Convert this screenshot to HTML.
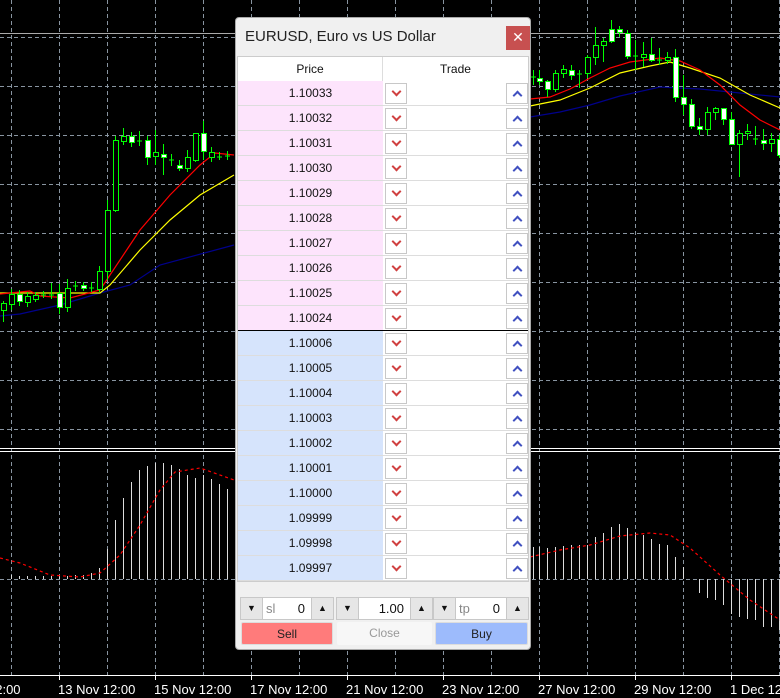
<!DOCTYPE html>
<html><head><meta charset="utf-8"><style>
*{margin:0;padding:0;box-sizing:border-box}
body{width:780px;height:698px;background:#000;position:relative;overflow:hidden;font-family:"Liberation Sans",sans-serif}
svg{position:absolute;left:0;top:0}
.dlg{position:absolute;left:235px;top:17px;width:296px;height:633px;background:#f0f0f0;border:1px solid #aaa;border-radius:4px}
.title{position:absolute;left:9px;top:10px;font-size:15px;color:#222}
.close{position:absolute;left:270px;top:8px;width:24px;height:24px;background:#c75050;color:#fff;font-size:14px;text-align:center;line-height:23px}
.tbl{position:absolute;left:1px;top:38px;width:292px;height:526px;background:#fff;border:1px solid #ccc}
.hd{position:absolute;top:0;height:24px;font-size:12px;text-align:center;line-height:24px;color:#111}
.r{position:absolute;left:0;width:290px;height:25px;border-bottom:1px solid #ddd}
.p{position:absolute;left:0;top:0;width:145px;height:24px;font-size:12px;text-align:center;line-height:25px;color:#111}
.dn,.up{position:absolute;top:2px;width:22px;height:21px;border:1px solid #c8c8c8;background:#fff}
.dn{left:147px}.up{left:268px}
.dn:after,.up:after{content:"";position:absolute;left:7px;width:5px;height:5px;border-style:solid;transform:rotate(45deg)}
.dn:after{top:4px;border-color:#d04040;border-width:0 2px 2px 0}
.up:after{top:8px;border-color:#4050c0;border-width:2px 0 0 2px}
.sp{position:absolute;top:579px;height:23px;border:1px solid #c8c8c8;background:#e6e6e6}
.ar{font-size:9px;text-align:center;line-height:21px;color:#111}
.in{background:#fff;font-size:13px;color:#111;text-align:right;padding-right:6px;line-height:21px}
.btn{position:absolute;top:604px;height:23px;font-size:12px;text-align:center;line-height:22px;border-radius:2px}
</style></head><body>
<svg width="780" height="698">
<g stroke="#8894a0" stroke-dasharray="4,3" stroke-width="1">
<path d="M11.5 0V675M59.5 0V675M107.5 0V675M155.5 0V675M203.5 0V675M251.5 0V675M299.5 0V675M347.5 0V675M395.5 0V675M443.5 0V675M491.5 0V675M539.5 0V675M587.5 0V675M635.5 0V675M683.5 0V675M731.5 0V675M779.5 0V675"/>
<path d="M0 37.5H780M0 86.5H780M0 135.5H780M0 184.5H780M0 233.5H780M0 282.5H780M0 331.5H780M0 380.5H780M0 429.5H780M0 579.5H780"/>
</g>
<path d="M0 33.5H780" stroke="#aaa"/>
<path d="M0 448.5H780M0 451.5H780M0 675.5H780" stroke="#fff"/>
<path d="M59.5 675V680M155.5 675V680M251.5 675V680M347.5 675V680M443.5 675V680M539.5 675V680M635.5 675V680M731.5 675V680" stroke="#fff"/>
<g fill="none" stroke-width="1.2">
<polyline stroke="#00008b" points="0,316 20,314 60,305 100,293 130,285 160,265 234,245"/>
<polyline stroke="#ff0" points="0,293 100,293 110,285 140,250 170,220 200,195 234,175"/>
<polyline stroke="#f00" points="0,294 20,292 30,291 40,296 70,298 100,290 110,275 140,230 170,195 200,165 215,153 234,155"/>
<polyline stroke="#00008b" points="530,117 560,112 590,105 620,96 660,87 700,89 740,93 780,97"/>
<polyline stroke="#ff0" points="530,106 560,100 590,88 620,73 650,66 670,62 690,68 720,78 750,95 780,108"/>
<polyline stroke="#f00" points="530,99 550,97 570,89 590,78 610,68 630,62 660,58 680,61 700,70 720,85 740,105 760,120 780,130"/>
</g>
<g stroke="#0f0" stroke-width="1" fill="#000">
<path d="M3.5 301V322M11.5 289V310M19.5 290V306M27.5 292V307M35.5 292V302M43.5 291V298M51.5 283V299M59.5 284V314M67.5 279V312M75.5 281V291M83.5 282V291M91.5 282V292M99.5 266V292M107.5 200V280M115.5 136V212M123.5 128V145M131.5 132V147M139.5 131V146M147.5 136V165M155.5 130V165M163.5 144V175M171.5 154V166M179.5 160V171M187.5 150V172M195.5 150V162M203.5 121V160M211.5 147V162M219.5 152V160M227.5 151V160"/>
<path d="M533.5 70V85M539.5 70V85M547.5 80V97M555.5 70V92M563.5 65V78M571.5 65V80M579.5 70V88M587.5 55V78M595.5 27V65M603.5 38V62M611.5 20V43M619.5 26V37M627.5 30V59M635.5 40V70M643.5 42V67M651.5 38V62M659.5 48V65M667.5 52V64M675.5 49V102M683.5 75V115M691.5 99V129M699.5 118V135M707.5 107V135M715.5 107V120M723.5 108V125M731.5 112V145M739.5 130V177M747.5 124V140M755.5 126V145M763.5 129V150M771.5 133V152M779.5 135V158"/>
<g fill="#000"><rect x="1.5" y="303.5" width="5" height="7"/><rect x="9.5" y="294.5" width="5" height="10"/><rect x="25.5" y="296.5" width="5" height="6"/><rect x="33.5" y="295.5" width="5" height="4"/><rect x="65.5" y="288.5" width="5" height="19"/><rect x="97.5" y="271.5" width="5" height="18"/><rect x="105.5" y="210.5" width="5" height="61"/><rect x="113.5" y="140.5" width="5" height="70"/><rect x="121.5" y="136.5" width="5" height="5"/><rect x="153.5" y="152.5" width="5" height="4"/><rect x="185.5" y="157.5" width="5" height="11"/><rect x="193.5" y="133.5" width="5" height="27"/><rect x="209.5" y="152.5" width="5" height="5"/>
<rect x="553.5" y="73.5" width="5" height="16"/><rect x="561.5" y="69.5" width="5" height="4"/><rect x="585.5" y="57.5" width="5" height="16"/><rect x="593.5" y="45.5" width="5" height="12"/><rect x="601.5" y="41.5" width="5" height="4"/><rect x="641.5" y="54.5" width="5" height="3"/><rect x="665.5" y="57.5" width="5" height="3"/><rect x="705.5" y="112.5" width="5" height="17"/><rect x="713.5" y="108.5" width="5" height="4"/><rect x="737.5" y="133.5" width="5" height="11"/><rect x="745.5" y="131.5" width="5" height="2"/><rect x="769.5" y="139.5" width="5" height="4"/></g>
<g fill="#fff"><rect x="17.5" y="294.5" width="5" height="7"/><rect x="57.5" y="293.5" width="5" height="14"/><rect x="81.5" y="285.5" width="5" height="3"/><rect x="129.5" y="136.5" width="5" height="6"/><rect x="145.5" y="140.5" width="5" height="17"/><rect x="161.5" y="154.5" width="5" height="3"/><rect x="177.5" y="165.5" width="5" height="3"/><rect x="201.5" y="133.5" width="5" height="18"/>
<rect x="537.5" y="78.5" width="5" height="3"/><rect x="545.5" y="81.5" width="5" height="8"/><rect x="569.5" y="70.5" width="5" height="5"/><rect x="609.5" y="29.5" width="5" height="12"/><rect x="617.5" y="29.5" width="5" height="3"/><rect x="625.5" y="33.5" width="5" height="23"/><rect x="649.5" y="54.5" width="5" height="6"/><rect x="673.5" y="57.5" width="5" height="40"/><rect x="681.5" y="97.5" width="5" height="7"/><rect x="689.5" y="104.5" width="5" height="22"/><rect x="697.5" y="126.5" width="5" height="3"/><rect x="721.5" y="108.5" width="5" height="11"/><rect x="729.5" y="119.5" width="5" height="25"/><rect x="761.5" y="140.5" width="5" height="3"/><rect x="777.5" y="139.5" width="5" height="16"/></g>
<path d="M41 295H46M49 295H54M73 286H78M89 288H94M137 141H142M169 160H174M217 157H222M225 156H230M530 77H536M577 74H582M633 56H638M657 60H662M753 139H758"/>
</g>
<g stroke="#ddd" stroke-width="1">
<path d="M11.5 579V575M19.5 579V576M27.5 579V576M35.5 579V576M43.5 579V576M51.5 579V576M59.5 579V576M67.5 579V576M75.5 579V575M83.5 579V575M91.5 579V573M99.5 579V568M107.5 579V549M115.5 579V520M123.5 579V498M131.5 579V482M139.5 579V470M147.5 579V466M155.5 579V463M163.5 579V463M171.5 579V465M179.5 579V469M187.5 579V475M195.5 579V478M203.5 579V475M211.5 579V479M219.5 579V484M227.5 579V489"/>
<path d="M533.5 579V547M539.5 579V547M547.5 579V548M555.5 579V547M563.5 579V546M571.5 579V545M579.5 579V545M587.5 579V545M595.5 579V537M603.5 579V533M611.5 579V527M619.5 579V524M627.5 579V528M635.5 579V533M643.5 579V535M651.5 579V539M659.5 579V544M667.5 579V545M675.5 579V557M683.5 579V567M699.5 579V593M707.5 579V598M715.5 579V600M723.5 579V605M731.5 579V614M739.5 579V617M747.5 579V619M755.5 579V620M763.5 579V627M771.5 579V627M779.5 579V630"/>
</g>
<g fill="none" stroke="#f00" stroke-dasharray="3,3" stroke-width="1.2">
<polyline points="0,558 20,563 50,575 80,577 100,573 120,555 140,525 160,490 175,472 200,468 234,480"/>
<polyline points="530,557 560,550 590,545 620,536 650,533 670,535 690,548 720,575 750,600 780,620"/>
</g>
<g fill="#fff" font-size="13" font-family="Liberation Sans,sans-serif">
<text x="-12" y="694">12:00</text><text x="58" y="694">13 Nov 12:00</text><text x="154" y="694">15 Nov 12:00</text><text x="250" y="694">17 Nov 12:00</text><text x="346" y="694">21 Nov 12:00</text><text x="442" y="694">23 Nov 12:00</text><text x="538" y="694">27 Nov 12:00</text><text x="634" y="694">29 Nov 12:00</text><text x="730" y="694">1 Dec 12:00</text>
</g>
</svg>
<div class="dlg">
<div class="title">EURUSD, Euro vs US Dollar</div>
<div class="close">✕</div>
<div class="tbl">
<div class="hd" style="left:0;width:145px;border-right:1px solid #ddd">Price</div>
<div class="hd" style="left:145px;width:145px">Trade</div>
<div class="r" style="top:24px"><div class="p" style="background:#fde4fc">1.10033</div><div class="dn"></div><div class="up"></div></div>
<div class="r" style="top:49px"><div class="p" style="background:#fde4fc">1.10032</div><div class="dn"></div><div class="up"></div></div>
<div class="r" style="top:74px"><div class="p" style="background:#fde4fc">1.10031</div><div class="dn"></div><div class="up"></div></div>
<div class="r" style="top:99px"><div class="p" style="background:#fde4fc">1.10030</div><div class="dn"></div><div class="up"></div></div>
<div class="r" style="top:124px"><div class="p" style="background:#fde4fc">1.10029</div><div class="dn"></div><div class="up"></div></div>
<div class="r" style="top:149px"><div class="p" style="background:#fde4fc">1.10028</div><div class="dn"></div><div class="up"></div></div>
<div class="r" style="top:174px"><div class="p" style="background:#fde4fc">1.10027</div><div class="dn"></div><div class="up"></div></div>
<div class="r" style="top:199px"><div class="p" style="background:#fde4fc">1.10026</div><div class="dn"></div><div class="up"></div></div>
<div class="r" style="top:224px"><div class="p" style="background:#fde4fc">1.10025</div><div class="dn"></div><div class="up"></div></div>
<div class="r" style="top:249px;border-bottom:1px solid #000"><div class="p" style="background:#fde4fc">1.10024</div><div class="dn"></div><div class="up"></div></div>
<div class="r" style="top:274px"><div class="p" style="background:#d6e4fc">1.10006</div><div class="dn"></div><div class="up"></div></div>
<div class="r" style="top:299px"><div class="p" style="background:#d6e4fc">1.10005</div><div class="dn"></div><div class="up"></div></div>
<div class="r" style="top:324px"><div class="p" style="background:#d6e4fc">1.10004</div><div class="dn"></div><div class="up"></div></div>
<div class="r" style="top:349px"><div class="p" style="background:#d6e4fc">1.10003</div><div class="dn"></div><div class="up"></div></div>
<div class="r" style="top:374px"><div class="p" style="background:#d6e4fc">1.10002</div><div class="dn"></div><div class="up"></div></div>
<div class="r" style="top:399px"><div class="p" style="background:#d6e4fc">1.10001</div><div class="dn"></div><div class="up"></div></div>
<div class="r" style="top:424px"><div class="p" style="background:#d6e4fc">1.10000</div><div class="dn"></div><div class="up"></div></div>
<div class="r" style="top:449px"><div class="p" style="background:#d6e4fc">1.09999</div><div class="dn"></div><div class="up"></div></div>
<div class="r" style="top:474px"><div class="p" style="background:#d6e4fc">1.09998</div><div class="dn"></div><div class="up"></div></div>
<div class="r" style="top:499px"><div class="p" style="background:#d6e4fc">1.09997</div><div class="dn"></div><div class="up"></div></div>
</div>
<div class="sp ar" style="left:4px;width:23px">▼</div>
<div class="sp in" style="left:26px;width:50px"><span style="float:left;padding-left:3px;color:#888">sl</span>0</div>
<div class="sp ar" style="left:75px;width:23px">▲</div>
<div class="sp ar" style="left:100px;width:23px">▼</div>
<div class="sp in" style="left:122px;width:53px">1.00</div>
<div class="sp ar" style="left:174px;width:23px">▲</div>
<div class="sp ar" style="left:197px;width:23px">▼</div>
<div class="sp in" style="left:219px;width:52px"><span style="float:left;padding-left:3px;color:#888">tp</span>0</div>
<div class="sp ar" style="left:270px;width:23px">▲</div>
<div class="btn" style="left:5px;width:92px;background:#ff7b7b;border:1px solid #ddd;color:#222">Sell</div>
<div class="btn" style="left:101px;width:95px;background:#f7f7f7;color:#999">Close</div>
<div class="btn" style="left:199px;width:93px;background:#9dbbfc;border:1px solid #ddd;color:#222">Buy</div>
</div>
</body></html>
